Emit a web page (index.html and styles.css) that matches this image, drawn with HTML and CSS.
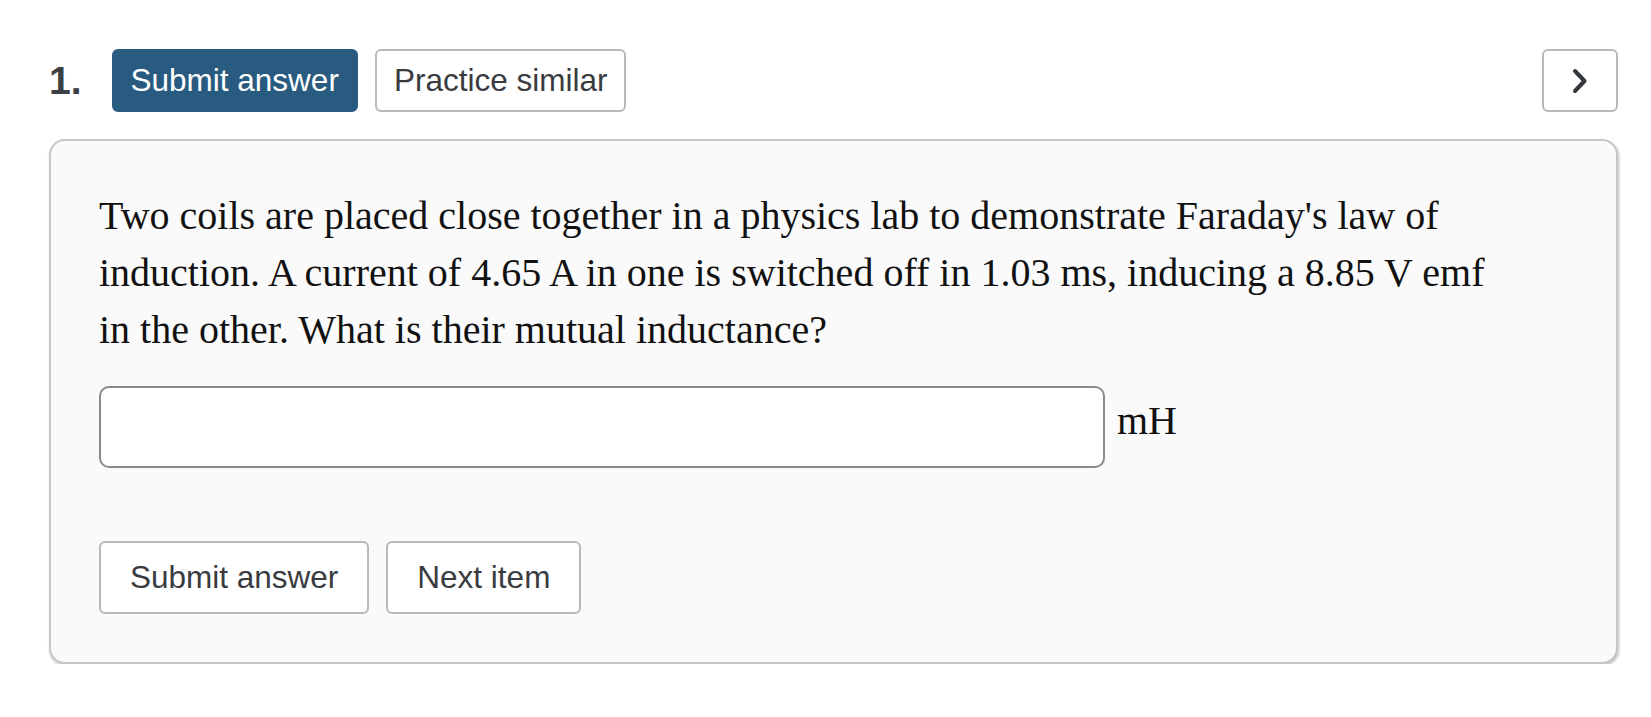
FILE: index.html
```html
<!DOCTYPE html>
<html lang="en">
<head>
<meta charset="utf-8">
<title>Question 1</title>
<link rel="stylesheet" href="styles.css">
</head>
<body>
<div class="page">
  <div class="toolbar">
    <span class="qnum">1.</span>
    <button class="btn btn-primary">Submit answer</button>
    <button class="btn btn-outline">Practice similar</button>
    <button class="btn btn-outline btn-icon" aria-label="Next">
      <svg width="16" height="26" viewBox="0 0 16 26"><path d="M3 3 L12.5 13 L3 23" fill="none" stroke="#33373c" stroke-width="4" stroke-linecap="round" stroke-linejoin="round"/></svg>
    </button>
  </div>
  <div class="card">
    <p class="question">Two coils are placed close together in a physics lab to demonstrate Faraday's law of<br>induction. A current of <span class="math">4.65 A</span> in one is switched off in <span class="math">1.03 ms</span>, inducing a <span class="math">8.85 V</span> emf<br>in the other. What is their mutual inductance?</p>
    <div class="answer-row">
      <input class="answer-input" type="text" aria-label="Answer">
      <span class="unit math">mH</span>
    </div>
    <div class="actions">
      <button class="btn btn-outline btn-lg">Submit answer</button>
      <button class="btn btn-outline btn-lg">Next item</button>
    </div>
  </div>
</div>
</body>
</html>
```
FILE: styles.css
```css
html, body {
  margin: 0;
  padding: 0;
  background: #ffffff;
}

.page {
  padding: 49px 33px 0 49px;
}

.toolbar {
  display: flex;
  align-items: center;
  margin-bottom: 27px;
}

.qnum {
  font-family: "Liberation Sans", Arial, sans-serif;
  font-weight: 700;
  font-size: 39px;
  color: #3c3f43;
  margin-left: 0;
  margin-right: 30px;
  line-height: 1;
}

.btn {
  font-family: "Liberation Sans", Arial, sans-serif;
  font-size: 31.5px;
  line-height: 37px;
  padding: 11px 17px;
  border-radius: 6px;
  border: 2px solid #b6b9bd;
  background: #ffffff;
  color: #393b3f;
  cursor: pointer;
  margin: 0;
}

.btn-primary {
  background: #295b81;
  border-color: #295b81;
  color: #ffffff;
  margin-right: 17px;
}

.btn-icon {
  margin-left: auto;
  width: 76px;
  height: 63px;
  padding: 0;
  display: flex;
  align-items: center;
  justify-content: center;
}

.btn-icon svg {
  display: block;
}

.card {
  background: #fafafa;
  border: 2px solid #c3c6ca;
  border-radius: 16px;
  box-shadow: 1px 2px 3px rgba(0, 0, 0, 0.25);
  padding: 46px 48px 48px 48px;
}

.question {
  margin: 0;
  font-family: "Liberation Serif", "Times New Roman", serif;
  font-size: 40px;
  line-height: 57px;
  color: #111111;
}

.math {
  font-family: "Liberation Serif", "Times New Roman", serif;
}

.answer-row {
  display: flex;
  align-items: flex-start;
  margin-top: 28px;
}

.answer-input {
  width: 1006px;
  height: 82px;
  box-sizing: border-box;
  border: 2px solid #8a8a8a;
  border-radius: 10px;
  background: #ffffff;
  margin: 0;
  font-size: 32px;
  padding: 0 14px;
}

.unit {
  font-size: 40px;
  line-height: 57px;
  color: #111111;
  margin-left: 12px;
  padding-top: 6px;
}

.actions {
  display: flex;
  gap: 17px;
  margin-top: 73px;
}

.btn-lg {
  padding: 16px 29px;
  line-height: 37px;
}
```
